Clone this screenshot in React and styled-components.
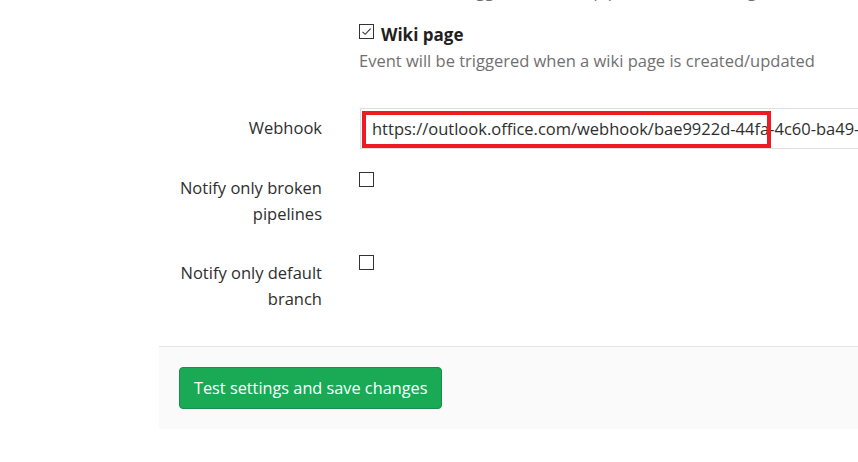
import React from "react";
import styled, { createGlobalStyle } from "styled-components";

const GlobalStyle = createGlobalStyle`
    html, body {
        margin: 0;
        padding: 0;
        background: #fff;
        overflow: hidden;
    }
    body {
        font-family: "Open Sans", "Noto Sans", sans-serif;
        font-size: 16.5px;
        color: #2e2e2e;
    }
`

const Page = styled.div`
    width: 858px;
    height: 462px;
    overflow: hidden;
    padding-left: 159px;
    box-sizing: border-box;
`

const Events = styled.div`
    margin-left: 200px;
    margin-top: -21px;
`

const EventTitle = styled.label`
    display: flex;
    align-items: flex-start;
    gap: 7px;
    margin-top: 20px;
    font-weight: 700;
    font-size: 17px;
    line-height: 24px;
    height: 24px;
    color: #1f1f1f;
`

const EventHint = styled.div`
    color: #707070;
    line-height: 24px;
    margin-top: ${props => props.top || 0}px;
    white-space: nowrap;
`

const Box = styled.span`
    width: 13px;
    height: 13px;
    border: 1px solid #333;
    background: #fff;
    display: inline-flex;
    align-items: center;
    justify-content: center;
    flex-shrink: 0;
    margin-top: ${props => props.offset || 0}px;
`

const FormRow = styled.div`
    display: grid;
    grid-template-columns: 163px 1fr;
    column-gap: 37px;
    margin-top: ${props => props.top || 0}px;
`

const Label = styled.div`
    text-align: right;
    line-height: 26px;
    padding-top: ${props => props.pad || 0}px;
    color: #2e2e2e;
    white-space: nowrap;
`

const Control = styled.div`
    position: relative;
`

const Input = styled.div`
    margin-left: 1px;
    height: 41px;
    width: 600px;
    border: 1px solid #dfdfdf;
    border-right: none;
    box-sizing: border-box;
    padding-left: 11px;
    display: flex;
    align-items: center;
    white-space: nowrap;
    color: #2e2e2e;
    overflow: hidden;
`

const Highlight = styled.div`
    position: absolute;
    left: 3px;
    top: 3px;
    width: 409px;
    height: 37px;
    border: 4px solid #ed1c24;
    box-sizing: border-box;
    pointer-events: none;
`

const Footer = styled.div`
    margin-top: 34px;
    background: #fafafa;
    border-top: 1px solid #e5e5e5;
    padding: 20px 20px 20px;
`

const SaveButton = styled.button`
    height: 42px;
    padding: 0 14px;
    background: #1aaa55;
    border: 1px solid #168f48;
    border-radius: 4px;
    color: #fff;
    font-family: inherit;
    font-size: 16.3px;
    cursor: pointer;
`

const Check = () => (
    <svg width="11" height="11" viewBox="0 0 11 11">
        <path d="M1.5 5.8 L4.2 8.3 L9.6 2.6" fill="none" stroke="#333" strokeWidth="1.1" />
    </svg>
)

const App = () => {
    return (
        <>
        <GlobalStyle />
        <Page>
            <Events>
                <EventHint>Event will be triggered when a pipeline status changes</EventHint>
                <EventTitle><Box offset={1}><Check /></Box>Wiki page</EventTitle>
                <EventHint top={2}>Event will be triggered when a wiki page is created/updated</EventHint>
            </Events>

            <FormRow top={35}>
                <Label pad={7}>Webhook</Label>
                <Control>
                    <Input>https://outlook.office.com/webhook/bae9922d-44fa-4c60-ba49-8e1a5b7c3d20</Input>
                    <Highlight />
                </Control>
            </FormRow>

            <FormRow top={20}>
                <Label pad={6}>Notify only broken<br />pipelines</Label>
                <Control>
                    <Box />
                </Control>
            </FormRow>

            <FormRow top={25}>
                <Label pad={8}>Notify only default<br />branch</Label>
                <Control>
                    <Box />
                </Control>
            </FormRow>

            <Footer>
                <SaveButton>Test settings and save changes</SaveButton>
            </Footer>
        </Page>
        </>
    )
}

export default App
